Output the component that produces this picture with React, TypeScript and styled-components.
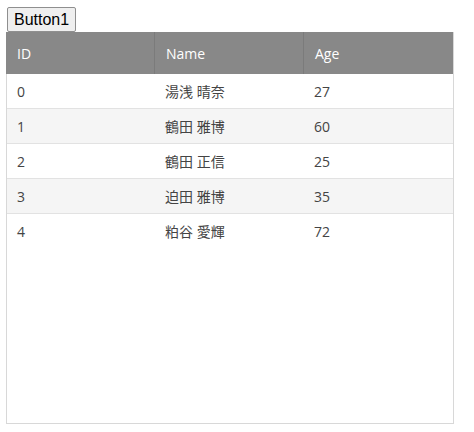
import React from "react";
import styled, { createGlobalStyle } from "styled-components";

const Global = createGlobalStyle`
  html, body { margin: 0; padding: 0; background: #fff; }
  body { padding: 7px 6px; font-family: "Open Sans", "Noto Sans CJK JP", sans-serif; }
`;

const Button = styled.button`
  font-family: "Liberation Sans", Arial, sans-serif;
  font-size: 16px;
  height: 25px;
  padding: 0 6px;
  margin-left: 1px;
  border: 1px solid #8f8f8f;
  border-radius: 2px;
  background: #efefef;
  color: #000;
  display: block;
`;

const Grid = styled.div`
  width: 448px;
  height: 392px;
  box-sizing: border-box;
  border: 1px solid #d8d8d8;
  border-top: none;
  display: flex;
  flex-direction: column;
`;

const HeaderRow = styled.div`
  display: grid;
  grid-template-columns: 149px 149px 148px;
  height: 42px;
  background: #888888;
  margin-left: -1px;
  margin-right: -1px;
  border-right: 1px solid #d8d8d8;
`;

const HeaderCell = styled.div<{ $last?: boolean }>`
  display: flex;
  align-items: center;
  padding-left: 11px;
  color: #fff;
  font-size: 14px;
  border-right: ${(p) => (p.$last ? "none" : "1px solid #7b7b7b")};
`;

const Row = styled.div<{ $alt: boolean; $last: boolean }>`
  display: grid;
  grid-template-columns: 148px 149px 149px;
  height: 34px;
  background: ${(p) => (p.$alt ? "#f5f5f5" : "#ffffff")};
  border-bottom: 1px solid ${(p) => (p.$last ? "transparent" : "#e2e2e2")};
`;

const Cell = styled.div`
  display: flex;
  align-items: center;
  padding-left: 10px;
  color: #444;
  font-size: 14px;
`;

const data = [
  { id: 0, name: "湯浅 晴奈", age: 27 },
  { id: 1, name: "鶴田 雅博", age: 60 },
  { id: 2, name: "鶴田 正信", age: 25 },
  { id: 3, name: "迫田 雅博", age: 35 },
  { id: 4, name: "粕谷 愛輝", age: 72 },
];

export default function App() {
  return (
    <>
      <Global />
      <Button>Button1</Button>
      <Grid>
        <HeaderRow>
          <HeaderCell>ID</HeaderCell>
          <HeaderCell>Name</HeaderCell>
          <HeaderCell $last>Age</HeaderCell>
        </HeaderRow>
        {data.map((d, i) => (
          <Row key={d.id} $alt={i % 2 === 1} $last={i === data.length - 1}>
            <Cell>{d.id}</Cell>
            <Cell>{d.name}</Cell>
            <Cell>{d.age}</Cell>
          </Row>
        ))}
      </Grid>
    </>
  );
}
